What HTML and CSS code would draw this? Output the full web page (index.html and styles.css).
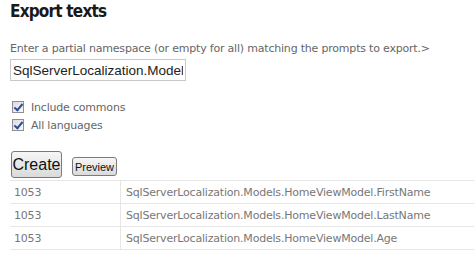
FILE: index.html
```html
<!DOCTYPE html>
<html lang="en">

<head>
    <meta charset="UTF-8">
    <title>Export texts</title>
    <link rel="stylesheet" href="styles.css">
</head>

<body>
    <h2>Export texts</h2>

    <form class="export-form">
        <p class="hint">Enter a partial namespace (or empty for all) matching the prompts to export.&gt;</p>
        <input type="text" class="ns-field" value="SqlServerLocalization.Model">

        <div class="options">
            <label class="check"><input type="checkbox" checked> Include commons</label>
            <label class="check"><input type="checkbox" checked> All languages</label>
        </div>

        <div class="actions">
            <button type="button" class="btn-create">Create</button>
            <button type="button" class="btn-preview">Preview</button>
        </div>
    </form>

    <table class="results">
        <tr>
            <td class="col-lang">1053</td>
            <td>SqlServerLocalization.Models.HomeViewModel.FirstName</td>
        </tr>
        <tr>
            <td class="col-lang">1053</td>
            <td>SqlServerLocalization.Models.HomeViewModel.LastName</td>
        </tr>
        <tr>
            <td class="col-lang">1053</td>
            <td>SqlServerLocalization.Models.HomeViewModel.Age</td>
        </tr>
    </table>
</body>

</html>
```

FILE: styles.css
```css
/* General */
body {
    font-family: "DejaVu Sans", sans-serif;
    font-size: 11px;
    letter-spacing: -0.2px;
    color: #666;
    background-color: #fff;
    margin: 0;
    padding: 0 0 0 10px;
}

h2 {
    font-family: "DejaVu Sans Condensed", "DejaVu Sans", sans-serif;
    font-size: 17px;
    font-weight: bold;
    letter-spacing: -0.8px;
    color: #1a1a1a;
    margin: 0;
    padding-top: 1px;
    line-height: 20px;
}

.hint {
    margin: 21px 0 3px 0;
    line-height: 14px;
}

.ns-field {
    display: block;
    width: 170px;
    height: 20px;
    padding: 0 2px;
    margin: 0;
    border: 1px solid #c8c8c8;
    font-family: "Liberation Sans", Arial, sans-serif;
    font-size: 13.5px;
    letter-spacing: 0;
    color: #222;
}

/* Checkboxes */
.options {
    margin-top: 17px;
}

.check {
    display: flex;
    align-items: center;
    height: 18px;
}

.check input {
    appearance: none;
    position: relative;
    width: 12px;
    height: 12px;
    margin: 0 7px 0 2px;
    border: 1px solid #8f8f8f;
    background: linear-gradient(135deg, #dcdcdc, #f8f8f8);
}

.check input:checked::after {
    content: "";
    position: absolute;
    left: 3px;
    top: 0;
    width: 3px;
    height: 7px;
    border: solid #2b4d9a;
    border-width: 0 2px 2px 0;
    transform: rotate(40deg);
}

/* Buttons */
.actions {
    display: flex;
    align-items: flex-end;
    gap: 10px;
    margin: 17px 0 2px 1px;
}

.btn-create {
    width: 51px;
    height: 27px;
    padding: 0;
    font-family: "Liberation Sans", Arial, sans-serif;
    font-size: 16px;
    letter-spacing: 0;
    color: #111;
    background: linear-gradient(#f6f6f6, #dadada);
    border: 1px solid #7a7a7a;
    border-radius: 3px;
}

.btn-preview {
    width: 45px;
    height: 19px;
    margin-bottom: 2px;
    padding: 0;
    font-family: "Liberation Sans", Arial, sans-serif;
    font-size: 11px;
    letter-spacing: 0;
    color: #111;
    background: linear-gradient(#f6f6f6, #dadada);
    border: 1px solid #7a7a7a;
    border-radius: 3px;
}

/* Results */
.results {
    width: 100%;
    border-collapse: collapse;
    color: #777;
}

.results td {
    height: 22px;
    padding: 0 5px;
    border-top: 1px solid #e6e6e6;
    border-bottom: 1px solid #e6e6e6;
}

.results .col-lang {
    padding-left: 4px;
    width: 101px;
    border-right: 1px solid #e6e6e6;
}
```
